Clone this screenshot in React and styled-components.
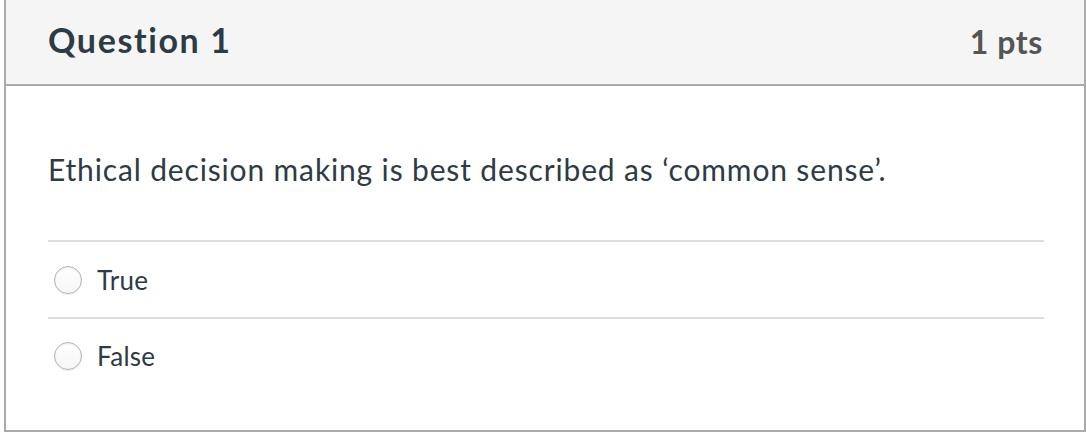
import React from "react";
import styled, { createGlobalStyle } from "styled-components";

const Global = createGlobalStyle`
  html, body { margin: 0; padding: 0; background: #fff; }
  body { font-family: Lato, "Open Sans", sans-serif; }
`;

const Card = styled.div`
  box-sizing: border-box;
  width: 1082px;
  margin-left: 4px;
  border: 2px solid #aaaaaa;
  border-top: none;
  background: #fff;
`;

const Header = styled.div`
  box-sizing: border-box;
  height: 86px;
  display: flex;
  align-items: center;
  justify-content: space-between;
  padding: 0 41px 5px 42px;
  background: #f5f5f5;
  border-bottom: 2px solid #aaaaaa;
`;

const Title = styled.h2`
  margin: 0;
  font-family: Lato, sans-serif;
  font-weight: 700;
  font-size: 34px;
  letter-spacing: 1.6px;
  line-height: 1;
  color: #2d3b45;
`;

const Points = styled.div`
  font-family: Lato, sans-serif;
  font-weight: 700;
  font-size: 32px;
  letter-spacing: 0.6px;
  line-height: 1;
  color: #555555;
  padding-top: 4px;
`;

const Body = styled.div`
  padding: 0 40px 38px 42px;
`;

const QuestionText = styled.p`
  box-sizing: border-box;
  height: 154px;
  margin: 0;
  padding-top: 65px;
  font-family: Lato, sans-serif;
  font-size: 30px;
  letter-spacing: 0.85px;
  line-height: 1.2;
  color: #2d3b45;
`;

const Answers = styled.div`
  display: flex;
  flex-direction: column;
`;

const Answer = styled.label`
  box-sizing: border-box;
  height: ${(p) => p.$h}px;
  display: flex;
  align-items: center;
  gap: 15px;
  padding-left: 6px;
  border-top: 2px solid #dddddd;
  font-family: Lato, sans-serif;
  font-size: 26px;
  letter-spacing: 0.3px;
  color: #2d3b45;
`;

const Radio = styled.span`
  box-sizing: border-box;
  width: 28px;
  height: 28px;
  border-radius: 50%;
  border: 1px solid #b4b4b4;
  background: linear-gradient(#ffffff, #f6f6f6);
  box-shadow: inset 0 1px 2px rgba(0, 0, 0, 0.08), 0 1px 1px rgba(0, 0, 0, 0.08);
  flex: none;
`;

export default function App() {
  return (
    <>
      <Global />
      <Card>
        <Header>
          <Title>Question 1</Title>
          <Points>1 pts</Points>
        </Header>
        <Body>
          <QuestionText>
            Ethical decision making is best described as ‘common sense’.
          </QuestionText>
          <Answers>
            <Answer $h={77}>
              <Radio />
              True
            </Answer>
            <Answer $h={75}>
              <Radio />
              False
            </Answer>
          </Answers>
        </Body>
      </Card>
    </>
  );
}
